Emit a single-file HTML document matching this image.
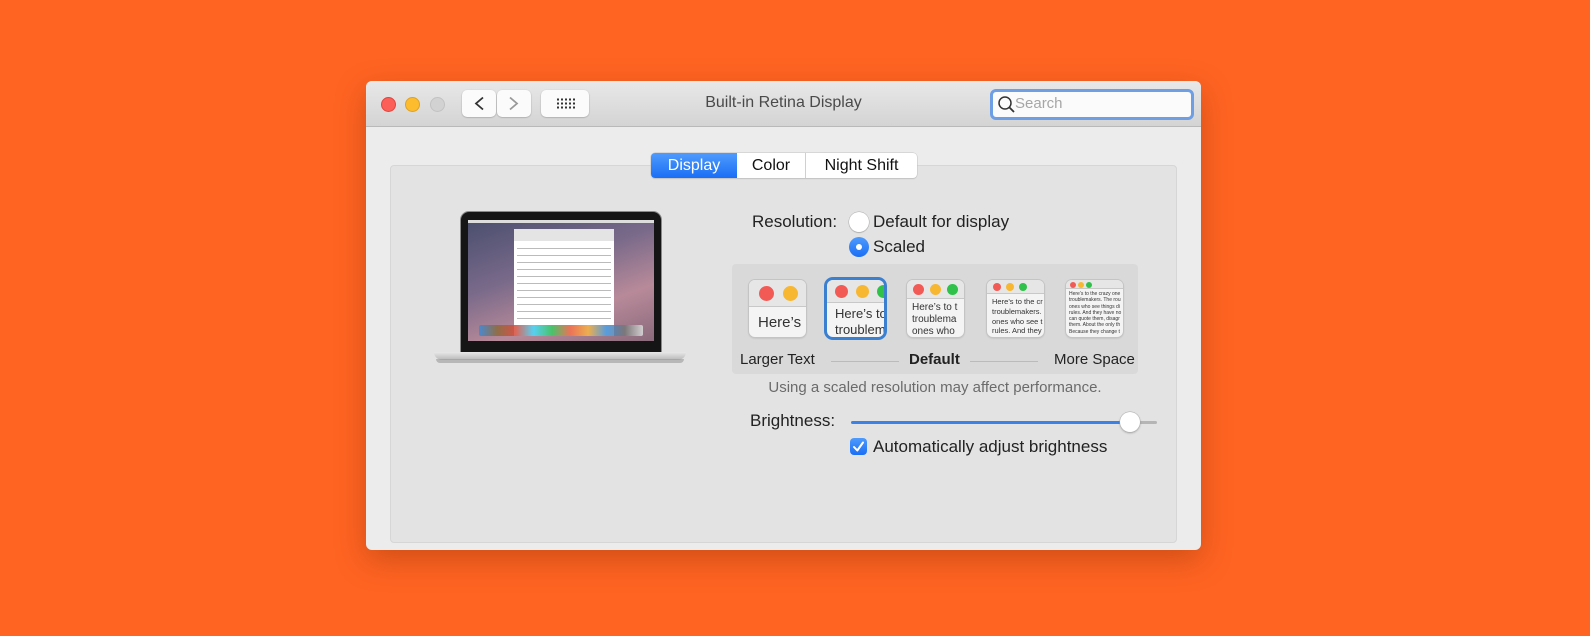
<!DOCTYPE html>
<html><head><meta charset="utf-8"><style>
*{margin:0;padding:0;box-sizing:border-box}
body{width:1590px;height:636px;background:#ff6422;font-family:"Liberation Sans",sans-serif;position:relative;overflow:hidden;color:#222}
.a{position:absolute}
#win{left:366px;top:81px;width:835px;height:469px;background:#ececec;border-radius:6px;box-shadow:0 10px 30px rgba(120,40,0,.35);overflow:hidden}
#tb{left:0;top:0;width:835px;height:46px;background:linear-gradient(#e8e8e8,#d4d4d4);border-bottom:1px solid #b9b9b9}
.dot{width:15px;height:15px;border-radius:50%}
.btn{background:#fbfbfb;border-radius:5px;box-shadow:0 0.5px 1.5px rgba(0,0,0,.3)}
#panel{left:24px;top:84px;width:787px;height:378px;background:#e3e3e3;border:1px solid #d6d6d6;border-radius:4px}
.lbl{font-size:17px;color:#222}
.th{width:57px;height:57px;background:#f4f4f4;border-radius:6px;box-shadow:0 0 0 1px #c4c4c4, 0 1px 2px rgba(0,0,0,.2);overflow:hidden}
.th .bar{position:absolute;left:0;top:0;width:100%;background:#e6e6e6;border-bottom:1px solid #c8c8c8}
.th .t{position:absolute;left:5px;color:#333;white-space:nowrap;line-height:1.2}
</style></head><body>
<div id="win" class="a">
 <div id="tb" class="a">
  <div class="a dot" style="left:15px;top:16px;background:#fc5f57;border:0.5px solid #e0443e"></div>
  <div class="a dot" style="left:39px;top:16px;background:#fdbc2e;border:0.5px solid #dea123"></div>
  <div class="a dot" style="left:64px;top:16px;background:#d2d2d2;border:0.5px solid #c2c2c2"></div>
  <div class="a btn" style="left:96px;top:9px;width:34px;height:27px"></div>
  <div class="a btn" style="left:131px;top:9px;width:34px;height:27px"></div>
  <svg class="a" style="left:96px;top:9px" width="69" height="27"><path d="M21 7.5 L14 13.5 L21 19.5" stroke="#333" stroke-width="1.8" fill="none"/><path d="M48 7.5 L55 13.5 L48 19.5" stroke="#999" stroke-width="1.8" fill="none"/></svg>
  <div class="a btn" style="left:175px;top:9px;width:48px;height:27px"></div>
  <svg class="a" style="left:175px;top:9px" width="48" height="27"><g fill="#333">
   <rect x="16" y="8.5" width="2" height="2"/><rect x="20" y="8.5" width="2" height="2"/><rect x="24" y="8.5" width="2" height="2"/><rect x="28" y="8.5" width="2" height="2"/><rect x="32" y="8.5" width="2" height="2"/>
   <rect x="16" y="12.5" width="2" height="2"/><rect x="20" y="12.5" width="2" height="2"/><rect x="24" y="12.5" width="2" height="2"/><rect x="28" y="12.5" width="2" height="2"/><rect x="32" y="12.5" width="2" height="2"/>
   <rect x="16" y="16.5" width="2" height="2"/><rect x="20" y="16.5" width="2" height="2"/><rect x="24" y="16.5" width="2" height="2"/><rect x="28" y="16.5" width="2" height="2"/><rect x="32" y="16.5" width="2" height="2"/></g></svg>
  <div class="a" style="left:0;width:835px;top:13px;text-align:center;font-size:16px;color:#4a4a4a">Built-in Retina Display</div>
  <div class="a" style="left:624px;top:8px;width:204px;height:31px;border-radius:6px;background:#fbfbfb;border:3px solid #6e9ee3"></div>
  <svg class="a" style="left:631px;top:14px" width="20" height="20"><circle cx="8" cy="8" r="6" stroke="#333" stroke-width="1.5" fill="none"/><path d="M12.5 12.5 L17 17" stroke="#333" stroke-width="1.8"/></svg>
  <div class="a" style="left:649px;top:14px;font-size:15px;color:#a6a6a6">Search</div>
 </div>
 <div id="panel" class="a"></div>
 <div class="a" style="left:285px;top:72px;width:266px;height:25px;background:#fff;border-radius:4px;box-shadow:0 0 0 0.5px #c2c2c2,0 1px 1px rgba(0,0,0,.15)"></div>
 <div class="a" style="left:285px;top:72px;width:86px;height:25px;background:linear-gradient(#4f9bfc,#1a6ef5);border-radius:4px 0 0 4px;color:#fff;font-size:16px;text-align:center;line-height:25px">Display</div>
 <div class="a" style="left:371px;top:72px;width:69px;height:25px;border-right:1px solid #d0d0d0;font-size:16px;text-align:center;line-height:25px;color:#111">Color</div>
 <div class="a" style="left:440px;top:72px;width:111px;height:25px;font-size:16px;text-align:center;line-height:25px;color:#111">Night Shift</div>

 <div class="a" style="left:94px;top:130px;width:202px;height:142px;background:#151515;border-radius:9px 9px 0 0;border:1px solid #8a8a8a"></div>
 <div class="a" style="left:102px;top:139px;width:186px;height:121px;background:linear-gradient(160deg,#4a4e6e 0%,#7a6a8a 40%,#b88a99 70%,#8a6a7c 100%)"></div>
 <div class="a" style="left:102px;top:139px;width:186px;height:3px;background:#ddd"></div>
 <div class="a" style="left:148px;top:148px;width:100px;height:107px;background:#fff"></div>
 <div class="a" style="left:148px;top:148px;width:100px;height:12px;background:#e4e4e4"></div>
 <div class="a" style="left:151px;top:164px;width:94px;height:80px;background:repeating-linear-gradient(#fff 0 3px,#bbb 3px 4px,#fff 4px 7px)"></div>
 <div class="a" style="left:113px;top:244px;width:164px;height:11px;background:linear-gradient(90deg,#3a8ad8,#8a6a3a,#d84a3a,#3ac8f0,#2ab850,#e85a3a,#e8a030,#3a8ad8,#777,#ddd);opacity:.85;border-radius:2px"></div>
 <div class="a" style="left:68px;top:271px;width:252px;height:8px;background:linear-gradient(#e8e8e8,#b8b8b8);border-radius:0 0 10px 10px"></div>
 <div class="a" style="left:70px;top:278px;width:248px;height:4px;background:#999;border-radius:0 0 40px 40px;opacity:.6"></div>

 <div class="a lbl" style="left:386px;top:131px">Resolution:</div>
 <div class="a" style="left:483px;top:131px;width:20px;height:20px;border-radius:50%;background:#fff;box-shadow:0 0 0 0.5px #aaa,0 1px 1px rgba(0,0,0,.2)"></div>
 <div class="a lbl" style="left:507px;top:131px">Default for display</div>
 <div class="a" style="left:483px;top:156px;width:20px;height:20px;border-radius:50%;background:linear-gradient(#4f9bfc,#1a6ef5)"></div>
 <div class="a" style="left:490px;top:163px;width:6px;height:6px;border-radius:50%;background:#fff"></div>
 <div class="a lbl" style="left:507px;top:156px">Scaled</div>

 <div class="a" style="left:366px;top:183px;width:406px;height:110px;background:#d9d9d9;border-radius:4px"></div>
 <div class="a th" style="left:383px;top:199px"><div class="bar" style="height:27px"></div>
  <div class="a dot" style="left:10px;top:6px;background:#f25a55"></div><div class="a dot" style="left:34px;top:6px;background:#f8b730"></div>
  <div class="t" style="top:34px;font-size:15px;left:9px">Here’s</div></div>
 <div class="a th" style="left:461px;top:199px;width:57px;height:57px;box-shadow:0 0 0 3px #3b7fd1"><div class="bar" style="height:23px"></div>
  <div class="a" style="left:8px;top:5px;width:13px;height:13px;border-radius:50%;background:#f25a55"></div><div class="a" style="left:29px;top:5px;width:13px;height:13px;border-radius:50%;background:#f8b730"></div><div class="a" style="left:50px;top:5px;width:13px;height:13px;border-radius:50%;background:#2fc149"></div>
  <div class="t" style="top:26px;font-size:13px;left:8px">Here’s to<br>troublem</div></div>
 <div class="a th" style="left:541px;top:199px"><div class="bar" style="height:19px"></div>
  <div class="a" style="left:6px;top:4px;width:11px;height:11px;border-radius:50%;background:#f25a55"></div><div class="a" style="left:23px;top:4px;width:11px;height:11px;border-radius:50%;background:#f8b730"></div><div class="a" style="left:40px;top:4px;width:11px;height:11px;border-radius:50%;background:#2fc149"></div>
  <div class="t" style="top:22px;font-size:10px">Here’s to t<br>troublema<br>ones who</div></div>
 <div class="a th" style="left:621px;top:199px"><div class="bar" style="height:14px"></div>
  <div class="a" style="left:6px;top:3px;width:8px;height:8px;border-radius:50%;background:#f25a55"></div><div class="a" style="left:19px;top:3px;width:8px;height:8px;border-radius:50%;background:#f8b730"></div><div class="a" style="left:32px;top:3px;width:8px;height:8px;border-radius:50%;background:#2fc149"></div>
  <div class="t" style="top:17px;font-size:7.5px;line-height:1.3">Here’s to the cr<br>troublemakers.<br>ones who see t<br>rules. And they</div></div>
 <div class="a th" style="left:700px;top:199px"><div class="bar" style="height:9px"></div>
  <div class="a" style="left:4px;top:2px;width:6px;height:6px;border-radius:50%;background:#f25a55"></div><div class="a" style="left:12px;top:2px;width:6px;height:6px;border-radius:50%;background:#f8b730"></div><div class="a" style="left:20px;top:2px;width:6px;height:6px;border-radius:50%;background:#2fc149"></div>
  <div class="t" style="top:11px;left:3px;font-size:5px;line-height:1.25">Here’s to the crazy one<br>troublemakers. The rou<br>ones who see things di<br>rules. And they have no<br>can quote them, disagr<br>them. About the only th<br>Because they change t</div></div>
 <div class="a" style="left:374px;top:270px;font-size:15px;color:#222">Larger Text</div>
 <div class="a" style="left:465px;top:280px;width:68px;height:1px;background:#bbb"></div>
 <div class="a" style="left:543px;top:270px;font-size:15px;font-weight:bold;color:#222">Default</div>
 <div class="a" style="left:604px;top:280px;width:68px;height:1px;background:#bbb"></div>
 <div class="a" style="left:688px;top:270px;font-size:15px;color:#222">More Space</div>
 <div class="a" style="left:366px;top:298px;width:406px;text-align:center;font-size:15px;color:#6b6b6b">Using a scaled resolution may affect performance.</div>

 <div class="a lbl" style="left:384px;top:330px">Brightness:</div>
 <div class="a" style="left:485px;top:340px;width:280px;height:3px;background:#3b82e8;border-radius:2px"></div>
 <div class="a" style="left:765px;top:340px;width:26px;height:3px;background:#b5b5b5;border-radius:2px"></div>
 <div class="a" style="left:754px;top:331px;width:20px;height:20px;border-radius:50%;background:#fff;box-shadow:0 0 0 0.5px #aaa,0 1px 2px rgba(0,0,0,.3)"></div>
 <div class="a" style="left:484px;top:357px;width:17px;height:17px;border-radius:4px;background:linear-gradient(#4f9bfc,#1a6ef5)"></div>
 <svg class="a" style="left:484px;top:357px" width="17" height="17"><path d="M4 9 L7.3 12.5 L13 4.5" stroke="#fff" stroke-width="2" fill="none" stroke-linecap="round" stroke-linejoin="round"/></svg>
 <div class="a lbl" style="left:507px;top:356px">Automatically adjust brightness</div>
</div>
</body></html>
